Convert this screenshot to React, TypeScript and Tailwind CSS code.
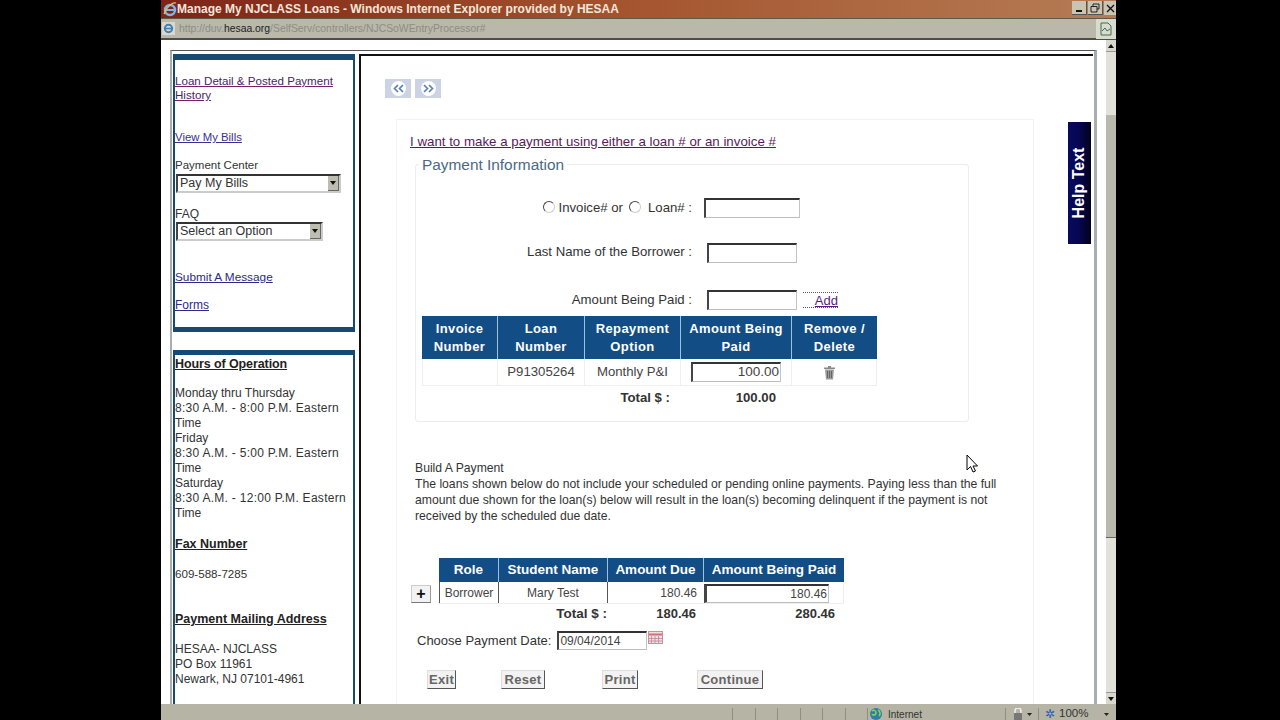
import React from "react";

const Th = ({ w, children }: { w: string; children: React.ReactNode }) => (
  <div className={`${w} flex items-center justify-center text-center border-r border-[#9cc3dd] last:border-r-0 text-white font-bold`}>{children}</div>
);

function Input({ cls, children }: { cls: string; children?: React.ReactNode }) {
  return (
    <div className={`${cls} border border-t-2 border-l-2 border-t-[#333] border-l-[#444] border-r-[#c4c4c4] border-b-[#bdbdbd] bg-white text-[12px] leading-[16px] text-[#444]`}>{children}</div>
  );
}

function Select({ cls, label }: { cls: string; label: string }) {
  return (
    <div className={`${cls} h-[19px] border-2 border-t-[#333] border-l-[#444] border-r-[#ccc] border-b-[#ccc] bg-white flex items-center justify-between`}>
      <span className="pl-[2px] text-[12.5px] text-[#333]">{label}</span>
      <span className="w-[11px] h-[15px] bg-[#bdbdb0] border-r border-b border-[#666] flex items-center justify-center">
        <svg width="6" height="4" viewBox="0 0 6 4"><path d="M0 0h6L3 4z" fill="#111" /></svg>
      </span>
    </div>
  );
}

function Btn({ cls, children }: { cls: string; children: React.ReactNode }) {
  return (
    <div className={`${cls} h-[19px] flex items-center justify-center bg-[#f2f2f2] border border-t-[#ddd] border-l-[#ddd] border-r-[#555] border-b-[#555] text-[13px] font-bold text-[#666] tracking-[0.3px]`}>{children}</div>
  );
}

function Chevrons({ right }: { right?: boolean }) {
  return (
    <div className="w-[26px] h-[19px] bg-[#ccd3e2] flex items-center justify-center">
      <div className="w-[15px] h-[15px] rounded-full bg-white flex items-center justify-center">
        <svg width="11" height="9" viewBox="0 0 11 9" fill="none" stroke="#5a7fc0" strokeWidth="1.7">
          {right ? <path d="M1 1l3.5 3.5L1 8M6 1l3.5 3.5L6 8" /> : <path d="M5 1L1.5 4.5 5 8M10 1L6.500 4.500 10 8" />}
        </svg>
      </div>
    </div>
  );
}

const Head = ({ children, cls = "" }: { children: React.ReactNode; cls?: string }) => (
  <div className={`font-bold underline text-[#222] text-[12.5px] leading-[15px] ${cls}`}>{children}</div>
);

const Hrs = ({ children }: { children: React.ReactNode }) => <span className="tracking-[0.28px]">{children}</span>;

export default function App() {
  return (
    <div className="w-[1280px] h-[720px] bg-black overflow-hidden pl-[161px]" style={{ fontFamily: '"Liberation Sans", Arial, sans-serif' }}>
      <div className="w-[955px] h-[720px] flex flex-col bg-white relative overflow-hidden">
        {/* Title bar */}
        <div className="h-[18px] shrink-0 flex items-center bg-gradient-to-r from-[#7e2318] via-[#a5552f] to-[#b57c55]">
          <svg width="16" height="16" viewBox="0 0 16 16" className="ml-[1px] shrink-0">
            <circle cx="8" cy="9" r="5" fill="none" stroke="#7fb4e6" strokeWidth="2.400" />
            <path d="M3 9h10" stroke="#7fb4e6" strokeWidth="2" />
            <path d="M2 13C5 5 11 1 14 2" stroke="#e8c55a" strokeWidth="1.200" fill="none" />
          </svg>
          <span className="-ml-[1px] text-[12px] font-bold text-[#f3e6da] whitespace-nowrap">Manage My NJCLASS Loans - Windows Internet Explorer provided by HESAA</span>
          <div className="ml-auto flex gap-[1px] items-start h-[18px] pt-[1px]">
            <div className="w-[15px] h-[14px] bg-[#c9c5b4] border-r border-b border-[#555] flex items-end justify-center"><div className="w-[6px] h-[2px] bg-[#111] mb-[2px]" /></div>
            <div className="w-[15px] h-[14px] bg-[#c9c5b4] border-r border-b border-[#555] flex items-center justify-center">
              <svg width="10" height="10" viewBox="0 0 10 10" fill="none" stroke="#222"><path d="M3 3V1h6v5H7M1 3.500h6V9H1z" /></svg>
            </div>
            <div className="w-[12px] h-[14px] bg-[#c9c5b4] flex items-center justify-center">
              <svg width="9" height="9" viewBox="0 0 9 9" stroke="#111" strokeWidth="1.300"><path d="M1 1l7 7M8 1L1 8" /></svg>
            </div>
          </div>
        </div>
        {/* Address bar */}
        <div className="h-[22px] shrink-0 flex items-center bg-[#b9b8aa] border-t border-[#5d5a4c] border-b-2 border-b-[#4f4e46]">
          <svg width="13" height="13" viewBox="0 0 16 16" className="ml-[1px] shrink-0">
            <rect width="16" height="16" fill="#d8d8cc" />
            <circle cx="8" cy="8" r="4.500" fill="none" stroke="#3d7fb8" strokeWidth="2.400" />
            <path d="M3 8h10" stroke="#3d7fb8" strokeWidth="2" />
          </svg>
          <span className="ml-[4px] text-[10.4px] text-[#8d8d82] whitespace-nowrap">http://duv.<span className="text-[#222]">hesaa.org</span>/SelfServ/controllers/NJCSoWEntryProcessor#</span>
          <div className="ml-auto w-[20px] h-[20px] bg-[#d6dcd0] flex items-center justify-center">
            <svg width="12" height="14" viewBox="0 0 12 14" fill="none" stroke="#4b6b52"><path d="M1 1h7l3 3v9H1zM2 9l3-3 2 3 3-2" /></svg>
          </div>
        </div>
        {/* Body */}
        <div className="flex-1 min-h-0 flex overflow-hidden">
          <div className="flex-1 min-w-0 pl-[9px] pt-[10px] pr-[9px]">
            {/* Outer frame */}
            <div className="relative h-[700px] border-t border-t-[#555] border-l-2 border-l-[#a8adb0] border-r-[3px] border-r-[#a8adb0] pt-[3px] pl-[1px] pr-[1px] flex">
              {/* Left column */}
              <div className="w-[186px] shrink-0 flex flex-col text-[12px] leading-[15px] text-[#333]">
                <div className="w-[182px] h-[278px] border-x-2 border-[#164a73] border-t-[6px] border-b-[5px]">
                  <div className="pt-[14px] text-[11.6px] leading-[14px] text-[#4b1d6b] underline decoration-[#7a2060]">Loan Detail &amp; Posted Payment<br />History</div>
                  <div className="mt-[28px] text-[11.4px] text-[#3a2f92] underline">View My Bills</div>
                  <div className="mt-[13px] text-[11.5px]">Payment Center</div>
                  <Select cls="w-[165px] ml-[1px] mt-[1px]" label="Pay My Bills" />
                  <div className="mt-[14px]">FAQ</div>
                  <Select cls="w-[147px] ml-[1px]" label="Select an Option" />
                  <div className="mt-[29px] text-[11.8px] text-[#2d2a8a] underline">Submit A Message</div>
                  <div className="mt-[13px] text-[#2d2a8a] underline">Forms</div>
                </div>
                <div className="w-[182px] mt-[18px] flex-1 border-x-2 border-[#164a73] border-t-[5px] border-[#164a73]">
                  <Head cls="pt-[2px] tracking-[-0.1px]">Hours of Operation</Head>
                  <div className="mt-[14px]">Monday thru Thursday<br /><Hrs>8:30 A.M. - 8:00 P.M. Eastern</Hrs> Time<br />Friday<br /><Hrs>8:30 A.M. - 5:00 P.M. Eastern</Hrs> Time<br />Saturday<br /><Hrs>8:30 A.M. - 12:00 P.M. Eastern</Hrs> Time</div>
                  <Head cls="mt-[16px]">Fax Number</Head>
                  <div className="mt-[14px] text-[11.6px]">609-588-7285</div>
                  <Head cls="mt-[31px]">Payment Mailing Address</Head>
                  <div className="mt-[15px]">HESAA- NJCLASS<br />PO Box 11961<br />Newark, NJ 07101-4961</div>
                </div>
              </div>
              {/* Right column */}
              <div className="flex-1 min-w-0 border-t-2 border-t-[#111] border-l-2 border-l-[#111] pl-[24px] pt-[23px]">
                <div className="flex gap-[4px] h-[19px]"><Chevrons /><Chevrons right /></div>
                <div className="ml-[11px] mt-[21px] w-[638px] h-[620px] border border-[#f2f2f2] pl-[13px] pt-[14px]">
                  <div className="text-[13.3px] leading-[16px] text-[#5a1a5e] underline whitespace-nowrap">I want to make a payment using either a loan # or an invoice #</div>
                  {/* Fieldset */}
                  <div className="relative ml-[5px] mt-[14px] w-[554px] h-[258px] border border-[#ececec] rounded-[3px] text-[13.2px] text-[#333]">
                    <div className="absolute left-[3px] top-[-8px] bg-white px-[3px] text-[15.4px] leading-[16px] text-[#4c6a84] whitespace-nowrap">Payment Information</div>
                    <div className="pt-[33px] h-[68px] flex items-start">
                      <div className="w-[276px] text-right flex justify-end items-center h-[20px] whitespace-nowrap">
                        <span className="w-[12px] h-[12px] rounded-full border border-[#444] border-r-[#ccc] border-b-[#ccc] bg-white mb-[2px] mr-[3px]" />
                        <span>Invoice# or</span>
                        <span className="w-[12px] h-[12px] rounded-full border border-[#444] border-r-[#ccc] border-b-[#ccc] bg-white mb-[2px] ml-[6px] mr-[7px]" />
                        <span>Loan# :</span>
                      </div>
                      <Input cls="ml-[12px] w-[96px] h-[20px]" />
                    </div>
                    <div className="h-[46px] pt-[10px] flex items-start">
                      <div className="w-[276px] text-right h-[18px] flex items-center justify-end whitespace-nowrap">Last Name of the Borrower :</div>
                      <Input cls="ml-[15px] w-[90px] h-[20px]" />
                    </div>
                    <div className="h-[37px] pt-[11px] flex items-start">
                      <div className="w-[276px] text-right h-[20px] flex items-center justify-end whitespace-nowrap">Amount Being Paid :</div>
                      <Input cls="ml-[15px] w-[90px] h-[20px]" />
                      <div className="ml-[6px] w-[35px] h-[16px] mt-[2px] border-y border-dotted border-[#555] text-right text-[13px] leading-[15px] text-[#5a1a7e] underline">Add</div>
                    </div>
                    <div className="ml-[6px] w-[455px]">
                      <div className="flex h-[43px] bg-[#124d85] leading-[18px] tracking-[0.4px] text-[13px]">
                        <Th w="w-[76px]">Invoice<br />Number</Th>
                        <Th w="w-[87px]">Loan<br />Number</Th>
                        <Th w="w-[96px]">Repayment<br />Option</Th>
                        <Th w="w-[111px]">Amount Being<br />Paid</Th>
                        <Th w="w-[85px]">Remove /<br />Delete</Th>
                      </div>
                      <div className="flex h-[27px] border-b border-[#eee] items-center text-[#444]">
                        <div className="w-[76px] h-full border-x border-[#eee]" />
                        <div className="w-[87px] h-full border-r border-[#eee] flex items-center justify-center">P91305264</div>
                        <div className="w-[96px] h-full border-r border-[#eee] flex items-center justify-center">Monthly P&amp;I</div>
                        <div className="w-[111px] h-full border-r border-[#eee] flex items-center justify-center">
                          <Input cls="w-[90px] h-[20px] text-right pr-[1px] text-[13.5px]">100.00</Input>
                        </div>
                        <div className="w-[85px] h-full border-r border-[#eee] flex items-center justify-center">
                          <svg width="13" height="15" viewBox="0 0 13 15" className="mr-[10px]">
                            <path d="M1 2.500h11V4H1zM5 1h3v1.500H5z" fill="#8a8a8a" />
                            <path d="M2 4.500h9L10 14.500H3z" fill="#9c9c9c" />
                            <path d="M4.500 6v7M6.500 6v7M8.500 6v7" stroke="#555" strokeWidth=".8" />
                          </svg>
                        </div>
                      </div>
                      <div className="flex h-[24px] items-center font-bold text-[#333]">
                        <div className="w-[248px] text-right">Total $ :</div>
                        <div className="w-[106px] text-right">100.00</div>
                      </div>
                    </div>
                  </div>
                  {/* Build a payment */}
                  <div className="ml-[5px] mt-[38px] text-[12.2px] leading-[16px] text-[#333] whitespace-nowrap">
                    Build A Payment<br />
                    The loans shown below do not include your scheduled or pending online payments. Paying less than the full<br />
                    amount due shown for the loan(s) below will result in the loan(s) becoming delinquent if the payment is not<br />
                    received by the scheduled due date.
                  </div>
                  {/* Table 2 */}
                  <div className="mt-[34px] ml-[29px] w-[405px]">
                    <div className="flex h-[24px] bg-[#124d85] text-[13.5px]">
                      <Th w="w-[60px]">Role</Th>
                      <Th w="w-[109px]">Student Name</Th>
                      <Th w="w-[96px]">Amount Due</Th>
                      <Th w="w-[140px]">Amount Being Paid</Th>
                    </div>
                    <div className="relative flex h-[22px] text-[12px] text-[#444] border-b border-[#eee]">
                      <div className="absolute left-[-28px] top-[3px] w-[20px] h-[18px] bg-[#f2f2f2] border border-[#ccc] border-b-[#777] border-r-[#999] flex items-center justify-center text-[16px] font-bold text-[#111]">+</div>
                      <div className="w-[60px] border-x border-x-[#555] flex items-center justify-center">Borrower</div>
                      <div className="w-[109px] border-r border-r-[#555] flex items-center justify-center">Mary Test</div>
                      <div className="w-[96px] flex items-center justify-end pr-[7px]">180.46</div>
                      <div className="w-[140px] border-r border-[#eee] flex items-start">
                        <Input cls="w-[125px] h-[19px] mt-[2px] border-l-[3px] text-right pr-[1px]">180.46</Input>
                      </div>
                    </div>
                    <div className="flex h-[20px] items-center font-bold text-[13px] text-[#333]">
                      <div className="w-[168px] text-right text-[13.5px]">Total $ :</div>
                      <div className="w-[89px] text-right">180.46</div>
                      <div className="w-[139px] text-right">280.46</div>
                    </div>
                  </div>
                  <div className="mt-[7px] ml-[7px] flex items-start text-[#333] text-[13px]">
                    <span className="mt-[1px] leading-[18px]">Choose Payment Date:</span>
                    <Input cls="ml-[6px] w-[90px] h-[19px] pl-[1px] text-[12.5px] bg-[#f8f8f8]">09/04/2014</Input>
                    <svg width="15" height="13" viewBox="0 0 15 13" className="ml-[1px]">
                      <rect x=".5" y=".5" width="14" height="12" fill="#f6dde0" stroke="#d58a95" />
                      <path d="M1 3.500h13" stroke="#d0707f" strokeWidth="2" />
                      <path d="M3.500 5v7M7 5v7M10.500 5v7M1 7.500h13M1 10h13" stroke="#b58a99" strokeWidth=".8" />
                    </svg>
                  </div>
                  <div className="mt-[20px] flex">
                    <Btn cls="ml-[17px] w-[29px]">Exit</Btn>
                    <Btn cls="ml-[45px] w-[44px]">Reset</Btn>
                    <Btn cls="ml-[57px] w-[36px]">Print</Btn>
                    <Btn cls="ml-[59px] w-[66px]">Continue</Btn>
                  </div>
                </div>
              </div>
              {/* Help tab */}
              <div className="absolute left-[896px] top-[71px] w-[23px] h-[122px] bg-gradient-to-r from-[#0a0a60] via-[#060650] to-[#02021e] flex items-center justify-center">
                <span className="text-white font-bold text-[16px] whitespace-nowrap -rotate-90">Help Text</span>
              </div>
            </div>
          </div>
          {/* Scrollbar */}
          <div className="w-[10px] shrink-0 flex flex-col bg-[#e2e2da]">
            <div className="h-[12px] bg-[#d8d8cc] border-b border-[#999] flex items-center justify-center">
              <svg width="6" height="4" viewBox="0 0 6 4"><path d="M3 0l3 4H0z" fill="#111" /></svg>
            </div>
            <div className="h-[63px]" />
            <div className="h-[423px] bg-[#b9b9ac] border-b border-b-[#666]" />
            <div className="flex-1" />
            <div className="h-[12px] bg-[#d8d8cc] border-t border-[#999] flex items-center justify-center">
              <svg width="6" height="4" viewBox="0 0 6 4"><path d="M0 0h6L3 4z" fill="#111" /></svg>
            </div>
          </div>
        </div>
        {/* Status bar */}
        <div className="h-[16px] shrink-0 bg-[#b5b4a5] flex items-end text-[11.5px] text-[#333] relative">
          <div className="w-[571px] h-[12px]" />
          {[23, 22, 23, 22, 23, 22].map((w, i) => (
            <div key={i} style={{ width: w }} className="h-[12px] border-l border-[#8f8e80] shrink-0" />
          ))}
          <div className="w-[138px] h-[12px] border-l border-[#8f8e80] flex items-center pl-[1px] gap-[5px] shrink-0">
            <svg width="14" height="14" viewBox="0 0 14 14"><circle cx="7" cy="7" r="6" fill="#2f7f9f" /><path d="M3 4c2-2 4 0 4 2S4 9 3 7M9 3c2 1 3 4 1 6" stroke="#8fcf6a" strokeWidth="1.500" fill="none" /></svg>
            <span className="text-[10px]">Internet</span>
          </div>
          <div className="w-[33px] h-[12px] border-l border-[#8f8e80] flex items-center justify-center gap-[4px] shrink-0">
            <svg width="10" height="12" viewBox="0 0 10 12"><path d="M2 5V3a3 3 0 016 0v2" fill="none" stroke="#eee" strokeWidth="1.500" /><rect x="1" y="5" width="8" height="7" fill="#777" /></svg>
            <svg width="5" height="3" viewBox="0 0 5 3"><path d="M0 0h5L2.500 3z" fill="#222" /></svg>
          </div>
          <div className="flex-1 h-[12px] border-l border-[#8f8e80] flex items-center pl-[6px] gap-[4px]">
            <span className="text-[#2a5db0] text-[12px] leading-none">✲</span>
            <span>100%</span>
            <svg width="5" height="3" viewBox="0 0 5 3" className="ml-[12px]"><path d="M0 0h5L2.500 3z" fill="#222" /></svg>
          </div>
        </div>
        {/* Cursor */}
        <svg width="12" height="19" viewBox="0 0 12 19" className="absolute left-[805px] top-[454px]">
          <path d="M1 1v15l3.500-3.500L7 18l2.500-1-2.500-5h4.500z" fill="#fff" stroke="#000" />
        </svg>
      </div>
    </div>
  );
}
